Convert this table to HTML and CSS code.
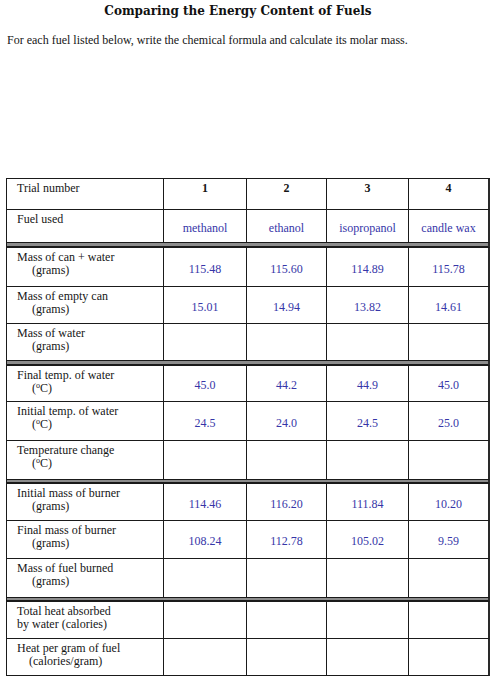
FILE: index.html
```html
<!DOCTYPE html>
<html>
<head>
<meta charset="utf-8">
<link rel="stylesheet" href="styles.css">
</head>
<body>
<h1 class="title">Comparing the Energy Content of Fuels</h1>
<p class="intro">For each fuel listed below, write the chemical formula and calculate its molar mass.</p>
<table class="data">
  <colgroup>
    <col class="c-label"><col class="c1"><col class="c2"><col class="c3"><col class="c4">
  </colgroup>
  <tr class="h31">
    <td class="label">Trial number</td>
    <td class="head">1</td><td class="head">2</td><td class="head">3</td><td class="head">4</td>
  </tr>
  <tr class="h33">
    <td class="label">Fuel used</td>
    <td class="val">methanol</td><td class="val">ethanol</td><td class="val">isopropanol</td><td class="val">candle wax</td>
  </tr>
  <tr class="sep s5"><td colspan="5"></td></tr>
  <tr class="h39">
    <td class="label">Mass of can + water<br><span class="ind">(grams)</span></td>
    <td class="val">115.48</td><td class="val">115.60</td><td class="val">114.89</td><td class="val">115.78</td>
  </tr>
  <tr class="h37">
    <td class="label">Mass of empty can<br><span class="ind">(grams)</span></td>
    <td class="val">15.01</td><td class="val">14.94</td><td class="val">13.82</td><td class="val">14.61</td>
  </tr>
  <tr class="h37">
    <td class="label">Mass of water<br><span class="ind">(grams)</span></td>
    <td class="val"></td><td class="val"></td><td class="val"></td><td class="val"></td>
  </tr>
  <tr class="sep s5"><td colspan="5"></td></tr>
  <tr class="h36">
    <td class="label">Final temp. of water<br><span class="ind">(<sup>o</sup>C)</span></td>
    <td class="val">45.0</td><td class="val">44.2</td><td class="val">44.9</td><td class="val">45.0</td>
  </tr>
  <tr class="h39">
    <td class="label">Initial temp. of water<br><span class="ind">(<sup>o</sup>C)</span></td>
    <td class="val">24.5</td><td class="val">24.0</td><td class="val">24.5</td><td class="val">25.0</td>
  </tr>
  <tr class="h39">
    <td class="label">Temperature change<br><span class="ind">(<sup>o</sup>C)</span></td>
    <td class="val"></td><td class="val"></td><td class="val"></td><td class="val"></td>
  </tr>
  <tr class="sep s4"><td colspan="5"></td></tr>
  <tr class="h37">
    <td class="label">Initial mass of burner<br><span class="ind">(grams)</span></td>
    <td class="val">114.46</td><td class="val">116.20</td><td class="val">111.84</td><td class="val">10.20</td>
  </tr>
  <tr class="h38">
    <td class="label">Final mass of burner<br><span class="ind">(grams)</span></td>
    <td class="val">108.24</td><td class="val">112.78</td><td class="val">105.02</td><td class="val">9.59</td>
  </tr>
  <tr class="h39">
    <td class="label">Mass of fuel burned<br><span class="ind">(grams)</span></td>
    <td class="val"></td><td class="val"></td><td class="val"></td><td class="val"></td>
  </tr>
  <tr class="sep s4"><td colspan="5"></td></tr>
  <tr class="h37">
    <td class="label">Total heat absorbed<br>by water (calories)</td>
    <td class="val"></td><td class="val"></td><td class="val"></td><td class="val"></td>
  </tr>
  <tr class="h37">
    <td class="label">Heat per gram of fuel<br><span class="ind2">(calories/gram)</span></td>
    <td class="val"></td><td class="val"></td><td class="val"></td><td class="val"></td>
  </tr>
</table>
</body>
</html>
```

FILE: styles.css
```css
html, body {
  margin: 0;
  padding: 0;
  background: #fff;
}
body {
  width: 494px;
  height: 680px;
  overflow: hidden;
  color: #161616;
  font-family: "Liberation Serif", "Times New Roman", serif;
}
.title {
  width: 476px;
  margin: 3px 0 0 0;
  font-family: "DejaVu Serif", serif;
  font-weight: bold;
  font-size: 12px;
  line-height: 16px;
  text-align: center;
  color: #111;
}
.intro {
  margin: 14px 0 0 7px;
  font-size: 12px;
  line-height: 14px;
}
.data {
  margin: 131px 0 0 6px;
  width: 483px;
  table-layout: fixed;
  border-collapse: separate;
  border-spacing: 0;
  border-top: 1px solid #1a1a1a;
  border-left: 1px solid #1a1a1a;
  font-size: 12px;
  line-height: 13px;
}
.c-label { width: 157px; }
.c1 { width: 83px; }
.c2 { width: 80px; }
.c3 { width: 82px; }
.c4 { width: 81px; }
.data td {
  box-sizing: border-box;
  border-right: 1px solid #1a1a1a;
  border-bottom: 1px solid #1a1a1a;
  padding: 0;
}
.data td:last-child {
  border-right: 2px solid #2a2a2a;
}
.data td.label {
  vertical-align: top;
  padding: 3px 0 0 10px;
}
.ind { padding-left: 15px; }
.ind2 { padding-left: 12px; }
sup {
  font-size: 8px;
  vertical-align: 4px;
  line-height: 0;
}
.data td.head {
  vertical-align: top;
  text-align: center;
  font-weight: bold;
  padding-top: 3px;
}
.data td.val {
  vertical-align: middle;
  text-align: center;
  padding-top: 4px;
  color: #3636a8;
}
.h31 td { height: 31px; }
.h33 td { height: 33px; }
.h36 td { height: 36px; }
.h37 td { height: 37px; }
.h38 td { height: 38px; }
.h39 td { height: 39px; }
.sep td {
  background: #8c8c8c;
  border-bottom: 2px solid #1a1a1a;
  padding: 0;
}
.s5 td { height: 5px; }
.s4 td { height: 4px; }
```
